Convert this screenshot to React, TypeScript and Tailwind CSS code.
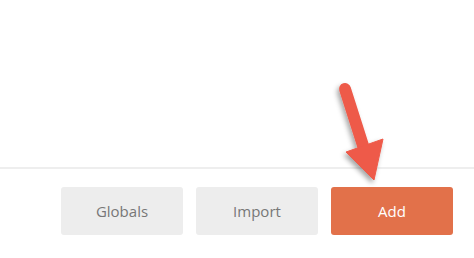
import React from "react";

export default function App() {
  return (
    <div className="relative w-[474px] h-[258px] bg-white overflow-hidden" style={{ fontFamily: '"Open Sans", sans-serif' }}>
      <div className="h-[167px]" />
      <div className="h-[2px] bg-[#eeeeee]" />
      <div className="flex justify-end gap-[13px] pt-[18px] pr-[21px]">
        <button className="w-[122px] h-[48px] rounded-[3px] bg-[#ededed] text-[#777777] text-[15px]">Globals</button>
        <button className="w-[122px] h-[48px] rounded-[3px] bg-[#ededed] text-[#777777] text-[15px]">Import</button>
        <button className="w-[122px] h-[48px] rounded-[3px] bg-[#e2714a] text-white text-[15px]">Add</button>
      </div>
      <svg className="absolute left-0 top-0" width="474" height="258" viewBox="0 0 474 258">
        <defs>
          <filter id="sh" x="-50%" y="-50%" width="200%" height="200%">
            <feDropShadow dx="-2" dy="3" stdDeviation="2.5" floodColor="#000" floodOpacity="0.35" />
          </filter>
        </defs>
        <g filter="url(#sh)" fill="#ee5a4a" stroke="#ee5a4a">
          <line x1="345" y1="89" x2="366" y2="155" strokeWidth="12" strokeLinecap="round" />
          <polygon points="346,152 383,139 374,180" strokeWidth="1" strokeLinejoin="round" />
        </g>
      </svg>
    </div>
  );
}
